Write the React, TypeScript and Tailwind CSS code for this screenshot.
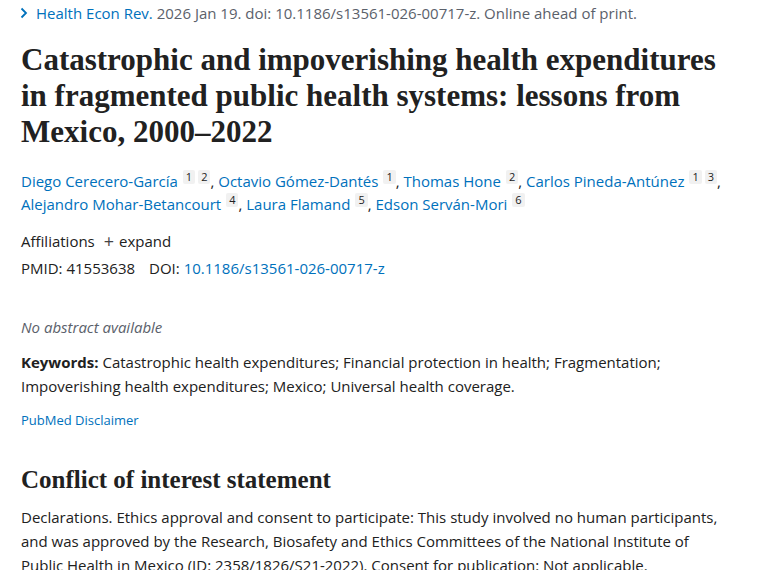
import React from "react";

const link = "text-[#0071bc]";

function Sup({ n, first }: { n: string; first?: boolean }) {
  return (
    <span
      className={`${first ? "ml-[5px]" : "ml-[3px]"} relative top-[-6px] inline-block rounded-[2px] bg-[#f1f1f1] px-[3px] text-[11px] leading-[14px] text-[#212121]`}
    >
      {n}
    </span>
  );
}

function Author({ name, sups, last }: { name: string; sups: string[]; last?: boolean }) {
  return (
    <span>
      <span className={link}>{name}</span>
      {sups.map((s, i) => (
        <Sup key={i} n={s} first={i === 0} />
      ))}
      {!last && <span>, </span>}
    </span>
  );
}

export default function App() {
  return (
    <div
      className="w-[760px] h-[570px] overflow-hidden bg-white px-[21px] text-[#212121]"
      style={{ fontFamily: '"Open Sans", "Noto Sans", sans-serif' }}
    >
      <div className="w-[708px]">
        <div className="pt-[2px] flex items-center text-[15px] leading-[22px] text-[#5b616b]">
          <svg width="10" height="14" viewBox="0 0 10 14" className="mr-[7px] -ml-[2px]">
            <path d="M2.5 2.5 L7 7 L2.5 11.5" fill="none" stroke="#0071bc" strokeWidth="1.8" />
          </svg>
          <span className={link}>Health Econ Rev.</span>
          <span>&nbsp;2026 Jan 19. doi: 10.1186/s13561-026-00717-z. Online ahead of print.</span>
        </div>

        <h1
          className="mt-[18px] text-[31px] leading-[36px] font-bold text-[#212121]"
          style={{ fontFamily: '"Liberation Serif", "DejaVu Serif", serif' }}
        >
          Catastrophic and impoverishing health expenditures in fragmented public health systems: lessons from Mexico, 2000–2022
        </h1>

        <div className="mt-[20px] text-[15px] leading-[23px]">
          <Author name="Diego Cerecero-García" sups={["1", "2"]} />
          <Author name="Octavio Gómez-Dantés" sups={["1"]} />
          <Author name="Thomas Hone" sups={["2"]} />
          <Author name="Carlos Pineda-Antúnez" sups={["1", "3"]} />
          <Author name="Alejandro Mohar-Betancourt" sups={["4"]} />
          <Author name="Laura Flamand" sups={["5"]} />
          <Author name="Edson Serván-Mori" sups={["6"]} last />
        </div>

        <div className="mt-[14px] flex items-center text-[15px] leading-[22px]">
          <span>Affiliations</span>
          <span className="ml-[9px] mr-[5px] text-[18px] leading-none text-[#444]">+</span>
          <span>expand</span>
        </div>
        <div className="mt-[5px] text-[15px] leading-[22px]">
          <span>PMID: 41553638</span>
          <span className="ml-[14px]">DOI: </span>
          <span className={link}>10.1186/s13561-026-00717-z</span>
        </div>

        <div className="mt-[37px] text-[15px] leading-[22px] italic text-[#5b616b]">No abstract available</div>

        <div className="mt-[12px] text-[15px] leading-[24px]">
          <span className="font-bold">Keywords:</span> Catastrophic health expenditures; Financial protection in health; Fragmentation; Impoverishing health expenditures; Mexico; Universal health coverage.
        </div>

        <div className={`mt-[12px] text-[13px] leading-[20px] ${link}`}>PubMed Disclaimer</div>

        <h2
          className="mt-[35px] text-[25px] leading-[30px] font-bold text-[#212121]"
          style={{ fontFamily: '"Liberation Serif", "DejaVu Serif", serif' }}
        >
          Conflict of interest statement
        </h2>

        <p className="mt-[10px] text-[15px] leading-[24px]">
          Declarations. Ethics approval and consent to participate: This study involved no human participants, and was approved by the Research, Biosafety and Ethics Committees of the National Institute of Public Health in Mexico (ID: 2358/1826/S21-2022). Consent for publication: Not applicable.
        </p>
      </div>
    </div>
  );
}
